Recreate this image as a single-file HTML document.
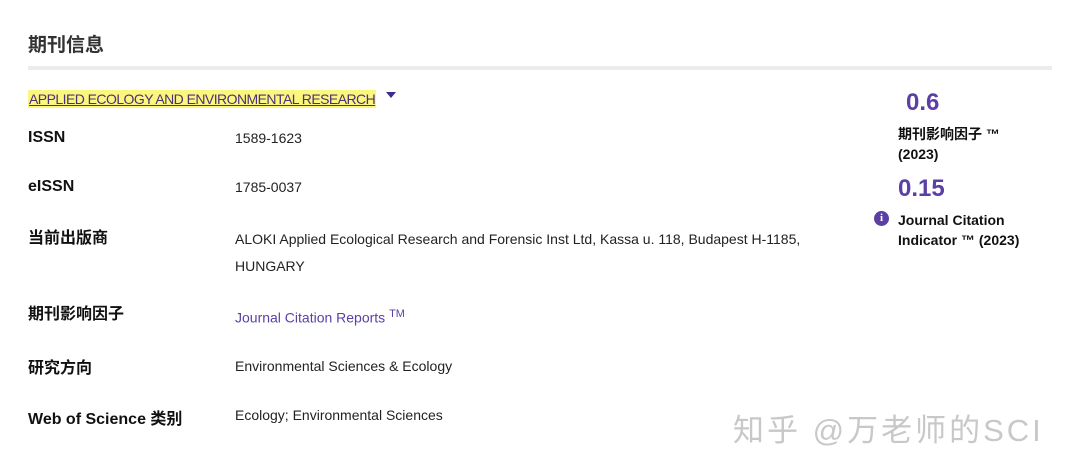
<!DOCTYPE html>
<html><head><meta charset="utf-8"><style>
body{margin:0;width:1080px;height:471px;background:#fff;font-family:"Liberation Sans","Noto Sans CJK SC",sans-serif;color:#222;position:relative;overflow:hidden}
.a{position:absolute;white-space:nowrap}
.h{left:28px;top:30px;font-size:19px;font-weight:bold;color:#333}
.bar{position:absolute;left:28px;top:66px;width:1024px;height:4px;background:#ececec}
.t{left:28px;top:90px;font-size:14px;line-height:18px;color:#4a2f7a;background:#fbf77e;text-decoration:underline;letter-spacing:-0.55px;padding:0 1px}
.l{left:28px;font-size:16px;font-weight:bold;color:#111}
.v{left:235px;font-size:14px;color:#222}
.n{font-size:24px;font-weight:bold;color:#5b3fa5}
.s{font-size:14px;font-weight:bold;color:#111;line-height:20px}
</style></head><body>
<div class="a h">期刊信息</div>
<div class="bar"></div>
<div class="a t">APPLIED ECOLOGY AND ENVIRONMENTAL RESEARCH</div>
<div class="a" style="left:386px;top:92px;width:0;height:0;border-left:5px solid transparent;border-right:5px solid transparent;border-top:6px solid #3a2d8c"></div>
<div class="a l" style="top:129px">ISSN</div><div class="a v" style="top:130px">1589-1623</div>
<div class="a l" style="top:178px">eISSN</div><div class="a v" style="top:179px">1785-0037</div>
<div class="a l" style="top:224px">当前出版商</div><div class="a v" style="top:226px;line-height:27px">ALOKI Applied Ecological Research and Forensic Inst Ltd, Kassa u. 118, Budapest H-1185,<br>HUNGARY</div>
<div class="a l" style="top:300px">期刊影响因子</div><div class="a v" style="top:308px;color:#5b3fa5">Journal Citation Reports <sup style="font-size:11px">TM</sup></div>
<div class="a l" style="top:354px">研究方向</div><div class="a v" style="top:358px">Environmental Sciences &amp; Ecology</div>
<div class="a l" style="top:405px">Web of Science 类别</div><div class="a v" style="top:407px">Ecology; Environmental Sciences</div>
<div class="a n" style="left:906px;top:89px">0.6</div>
<div class="a s" style="left:898px;top:124px">期刊影响因子 ™<br>(2023)</div>
<div class="a n" style="left:898px;top:175px">0.15</div>
<div class="a" style="left:874px;top:211px;width:15px;height:15px;border-radius:50%;background:#5b3fa5;color:#fff;font-size:11px;font-weight:bold;text-align:center;line-height:15px;font-family:'Liberation Serif',serif">i</div>
<div class="a s" style="left:898px;top:210px">Journal Citation<br>Indicator ™ (2023)</div>
<div class="a" style="left:733px;top:405px;font-size:31px;letter-spacing:3px;color:#bbb;opacity:.8">知乎 @万老师的SCI</div>
</body></html>
